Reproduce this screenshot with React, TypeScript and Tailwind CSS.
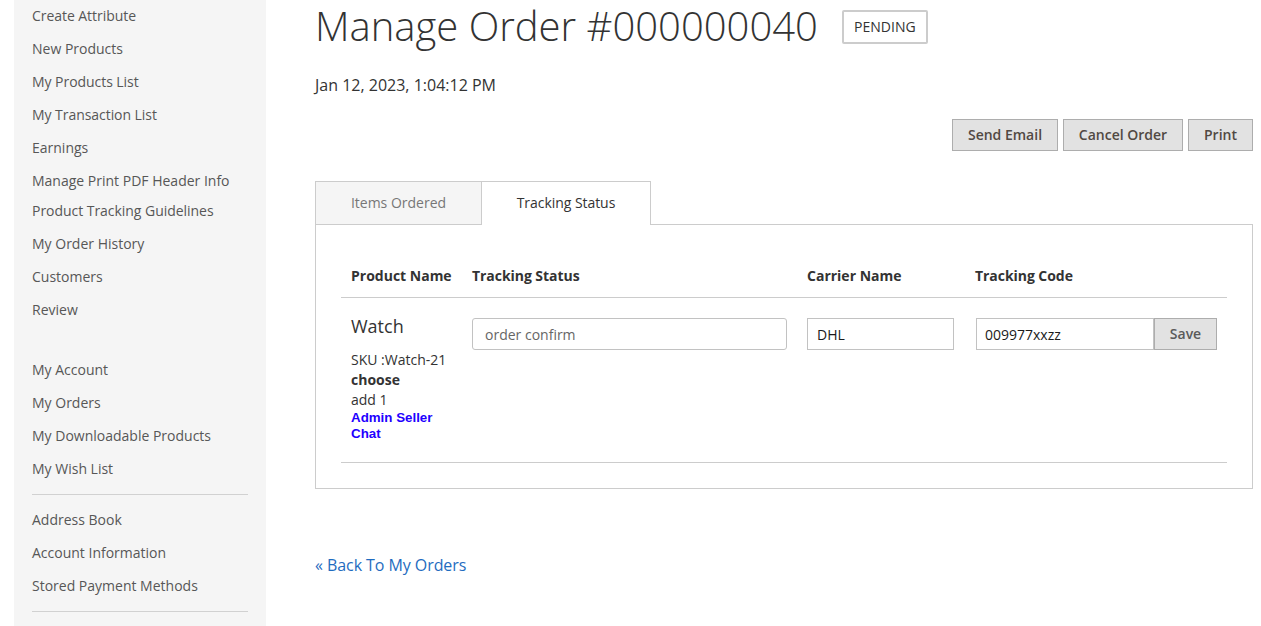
const SideItem = ({ label, className = "" }: { label: string; className?: string }) => (
  <a href="#" className={`block h-[33px] px-[18px] leading-[33px] text-[#575757] whitespace-nowrap ${className}`}>
    {label}
  </a>
);

const Sidebar = () => (
  <div className="w-[252px] h-[626px] ml-[14px] shrink-0 bg-[#f5f5f5] overflow-hidden text-[14px]">
    <SideItem label="Create Attribute" className="-mt-px tracking-[-0.05px]" />
    <SideItem label="New Products" />
    <SideItem label="My Products List" className="tracking-[-0.05px]" />
    <SideItem label="My Transaction List" className="tracking-[-0.05px]" />
    <SideItem label="Earnings" />
    <SideItem label="Manage Print PDF Header Info" />
    <SideItem label="Product Tracking Guidelines" className="-mt-[3px] tracking-[-0.04px]" />
    <SideItem label="My Order History" />
    <SideItem label="Customers" />
    <SideItem label="Review" />
    <SideItem label="My Account" className="mt-[27px]" />
    <SideItem label="My Orders" />
    <SideItem label="My Downloadable Products" />
    <SideItem label="My Wish List" />
    <div className="mx-[18px] mt-[9px] mb-[8px] h-px bg-[#d1d1d1]" />
    <SideItem label="Address Book" />
    <SideItem label="Account Information" />
    <SideItem label="Stored Payment Methods" />
    <div className="mx-[18px] my-[9px] h-px bg-[#d1d1d1]" />
  </div>
);

const ActionButton = ({ label, width }: { label: string; width: string }) => (
  <button className={`${width} h-8 pb-[2px] border border-[#adadad] bg-[#e2e2e2] text-[14px] font-semibold text-[#514943]`}>
    {label}
  </button>
);

const TrackingTable = () => (
  <div className="mx-[25px] mt-[25px] border-b border-[#cccccc]">
    <div className="grid grid-cols-[121px_335px_168px_262px] h-[48px] border-b border-[#cccccc] text-[14px] font-bold text-[#333333] leading-[52px]">
      <div className="pl-[10px]">Product Name</div>
      <div className="pl-[10px] tracking-[-0.05px]">Tracking Status</div>
      <div className="pl-[10px]">Carrier Name</div>
      <div className="pl-[10px] tracking-[-0.05px]">Tracking Code</div>
    </div>
    <div className="grid grid-cols-[121px_335px_168px_262px] h-[164px] pt-[20px] text-[#333333]">
      <div className="pl-[10px]">
        <div className="text-[18px] leading-[18px] -mt-px">Watch</div>
        <div className="mt-[15px] text-[14px] leading-[20px] whitespace-nowrap">SKU :Watch-21</div>
        <div className="text-[14px] leading-[20px] font-bold">choose</div>
        <div className="text-[14px] leading-[20px]">add 1</div>
        <a href="#" className="block w-[100px] font-['Liberation_Sans',Arial,sans-serif] text-[13.33px] font-bold leading-[16px] text-[#2200ff]">
          Admin Seller Chat
        </a>
      </div>
      <div className="pl-[10px] pr-[10px]">
        <input
          readOnly
          value="order confirm"
          className="w-full h-8 px-[12px] border border-[#c2c2c2] rounded-[3px] text-[14px] text-[#666666] bg-white"
        />
      </div>
      <div className="pl-[10px]">
        <input
          readOnly
          value="DHL"
          className="w-[147px] h-8 px-[9px] border border-[#c2c2c2] text-[14px] text-[#1a1a1a] bg-white"
        />
      </div>
      <div className="pl-[11px] flex items-start">
        <input
          readOnly
          value="009977xxzz"
          className="w-[178px] h-8 px-[8px] border border-[#c2c2c2] text-[14px] text-[#1a1a1a] bg-white"
        />
        <button className="w-[63px] h-8 pb-[2px] border border-[#adadad] bg-[#e2e2e2] text-[14px] font-semibold text-[#5a5a5a]">
          Save
        </button>
      </div>
    </div>
  </div>
);

const App = () => {
  return (
    <div className="flex w-[1261px] h-[626px] overflow-hidden bg-white font-['Open_Sans',sans-serif] text-[#333333]">
      <Sidebar />
      <div className="w-[938px] ml-[49px] shrink-0">
        <div className="flex items-center h-[54px]">
          <h1 className="-mt-[2px] text-[40px] font-light leading-[50px] whitespace-nowrap">Manage Order #000000040</h1>
          <span className="ml-[24px] w-[86px] h-[34px] border-2 border-[#cccccc] rounded-[2px] text-center text-[14px] leading-[30px] uppercase">
            Pending
          </span>
        </div>
        <div className="mt-[20px] text-[16px] leading-[22px]">Jan 12, 2023, 1:04:12 PM</div>
        <div className="flex justify-end gap-[5px] mt-[23px]">
          <ActionButton label="Send Email" width="w-[106px]" />
          <ActionButton label="Cancel Order" width="w-[120px]" />
          <ActionButton label="Print" width="w-[65px]" />
        </div>
        <div className="flex mt-[30px] text-[14px] relative z-10">
          <div className="w-[167px] h-[44px] border border-[#cccccc] bg-[#f5f5f5] text-center leading-[42px] text-[#777777]">
            Items Ordered
          </div>
          <div className="w-[169px] h-[44px] border border-l-0 border-b-0 border-[#cccccc] bg-white text-center leading-[42px] tracking-[-0.05px]">
            Tracking Status
          </div>
        </div>
        <div className="-mt-px h-[265px] border border-[#cccccc]">
          <TrackingTable />
        </div>
        <a href="#" className="block mt-[65px] text-[16px] leading-[22px] tracking-[-0.07px] text-[#1f6cc0]">
          « Back To My Orders
        </a>
      </div>
    </div>
  );
};

export default App;
